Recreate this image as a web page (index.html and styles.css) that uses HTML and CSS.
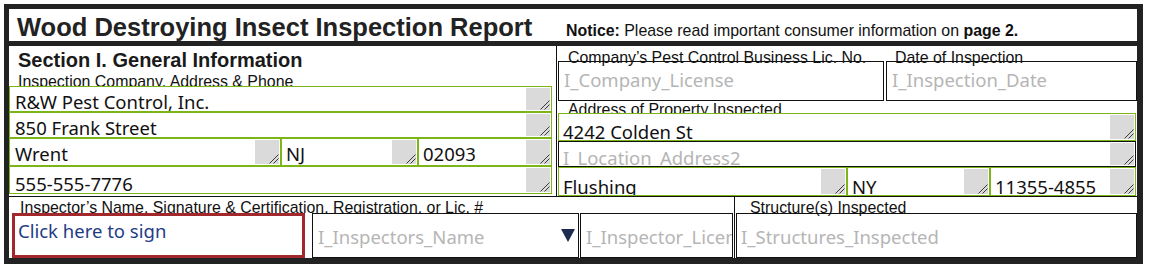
FILE: index.html
```html
<!DOCTYPE html>
<html>
<head>
<meta charset="utf-8">
<link rel="stylesheet" href="styles.css">
</head>
<body>
<div class="form">
  <div class="titlebar">
    <h1 class="title">Wood Destroying Insect Inspection Report</h1>
    <p class="notice"><b>Notice:</b> Please read important consumer information on <b>page 2.</b></p>
  </div>

  <div class="top">
    <div class="left">
      <div class="sec-title">Section I. General Information</div>
      <div class="lab sub">Inspection Company, Address &amp; Phone</div>
      <div class="box g h26 wide"><span class="val pt3 pl5">R&amp;W Pest Control, Inc.</span><span class="grip"><svg width="12" height="12" viewBox="0 0 12 12"><path d="M11.5 2.5 L2.5 11.5 M11.5 6.5 L6.5 11.5" stroke="#3a3a3a" stroke-width="1" fill="none"/></svg></span></div>
      <div class="box g h26 wide"><span class="val pt3 pl5">850 Frank Street</span><span class="grip"><svg width="12" height="12" viewBox="0 0 12 12"><path d="M11.5 2.5 L2.5 11.5 M11.5 6.5 L6.5 11.5" stroke="#3a3a3a" stroke-width="1" fill="none"/></svg></span></div>
      <div class="split h28 wide">
        <div class="box g w-city"><span class="val pt3 pl5">Wrent</span><span class="grip"><svg width="12" height="12" viewBox="0 0 12 12"><path d="M11.5 2.5 L2.5 11.5 M11.5 6.5 L6.5 11.5" stroke="#3a3a3a" stroke-width="1" fill="none"/></svg></span></div>
        <div class="box g w-st"><span class="val pt3">NJ</span><span class="grip"><svg width="12" height="12" viewBox="0 0 12 12"><path d="M11.5 2.5 L2.5 11.5 M11.5 6.5 L6.5 11.5" stroke="#3a3a3a" stroke-width="1" fill="none"/></svg></span></div>
        <div class="box g w-zip"><span class="val pt3">02093</span><span class="grip"><svg width="12" height="12" viewBox="0 0 12 12"><path d="M11.5 2.5 L2.5 11.5 M11.5 6.5 L6.5 11.5" stroke="#3a3a3a" stroke-width="1" fill="none"/></svg></span></div>
      </div>
      <div class="box g h28 wide"><span class="val pt5 pl5">555-555-7776</span><span class="grip"><svg width="12" height="12" viewBox="0 0 12 12"><path d="M11.5 2.5 L2.5 11.5 M11.5 6.5 L6.5 11.5" stroke="#3a3a3a" stroke-width="1" fill="none"/></svg></span></div>
    </div>

    <div class="right">
      <div class="rowA">
        <div class="cell c-lic">
          <div class="lab labA">Company’s Pest Control Business Lic. No.</div>
          <div class="fld hA"><span class="val ph pt6 pl5">I_Company_License</span></div>
        </div>
        <div class="cell c-date">
          <div class="lab labA">Date of Inspection</div>
          <div class="fld hA"><span class="val ph pt6 pl5">I_Inspection_Date</span></div>
        </div>
      </div>
      <div class="lab labB">Address of Property Inspected</div>
      <div class="box g h28 rwide"><span class="val pt6">4242 Colden St</span><span class="grip"><svg width="12" height="12" viewBox="0 0 12 12"><path d="M11.5 2.5 L2.5 11.5 M11.5 6.5 L6.5 11.5" stroke="#3a3a3a" stroke-width="1" fill="none"/></svg></span></div>
      <div class="box k h26 rwide"><span class="val ph pt4">I_Location_Address2</span><span class="grip"><svg width="12" height="12" viewBox="0 0 12 12"><path d="M11.5 2.5 L2.5 11.5 M11.5 6.5 L6.5 11.5" stroke="#3a3a3a" stroke-width="1" fill="none"/></svg></span></div>
      <div class="split h29 rwide">
        <div class="box g w-rcity"><span class="val pt7">Flushing</span><span class="grip"><svg width="12" height="12" viewBox="0 0 12 12"><path d="M11.5 2.5 L2.5 11.5 M11.5 6.5 L6.5 11.5" stroke="#3a3a3a" stroke-width="1" fill="none"/></svg></span></div>
        <div class="box g w-rst"><span class="val pt7">NY</span><span class="grip"><svg width="12" height="12" viewBox="0 0 12 12"><path d="M11.5 2.5 L2.5 11.5 M11.5 6.5 L6.5 11.5" stroke="#3a3a3a" stroke-width="1" fill="none"/></svg></span></div>
        <div class="box g w-rzip"><span class="val pt7">11355-4855</span><span class="grip"><svg width="12" height="12" viewBox="0 0 12 12"><path d="M11.5 2.5 L2.5 11.5 M11.5 6.5 L6.5 11.5" stroke="#3a3a3a" stroke-width="1" fill="none"/></svg></span></div>
      </div>
    </div>
  </div>

  <div class="bottom">
    <div class="bl">
      <div class="lab blab">Inspector’s Name, Signature &amp; Certification, Registration, or Lic. #</div>
      <div class="brow">
        <div class="sign"><span class="val signtxt">Click here to sign</span></div>
        <div class="fld name"><span class="val ph pt11 pl5">I_Inspectors_Name</span><svg class="caret" width="14" height="13" viewBox="0 0 14 13"><polygon points="0,0 14,0 7,13" fill="#1c2b4f"/></svg></div>
        <div class="fld lic"><span class="val ph pt11 pl5">I_Inspector_License</span></div>
      </div>
    </div>
    <div class="br">
      <div class="lab blab brlab">Structure(s) Inspected</div>
      <div class="brow">
        <div class="fld struct"><span class="val ph pt11">I_Structures_Inspected</span></div>
      </div>
    </div>
  </div>
</div>
</body>
</html>
```

FILE: styles.css
```css
* { box-sizing: border-box; margin: 0; padding: 0; }

body {
  margin: 0;
  width: 1149px;
  height: 269px;
  overflow: hidden;
  background: #fff;
  font-family: "Liberation Sans", Arial, sans-serif;
  color: #1a1a1a;
}

.form {
  margin: 4px 0 0 4px;
  width: 1139px;
  border: 5px solid #222;
  border-right-width: 6px;
  border-bottom-width: 6px;
}

/* ---------- title bar ---------- */
.titlebar {
  display: flex;
  height: 37px;
  border-bottom: 5px solid #222;
}
.title {
  flex: 0 0 557px;
  padding: 4px 0 0 8px;
  font-size: 25.5px;
  line-height: 28px;
  font-weight: bold;
  color: #222;
  white-space: nowrap;
}
.notice {
  padding-top: 13px;
  font-size: 15.9px;
  line-height: 18px;
  color: #111;
  white-space: nowrap;
}

/* ---------- labels ---------- */
.lab {
  font-size: 15.9px;
  white-space: nowrap;
  color: #111;
}

/* ---------- top section ---------- */
.top {
  display: flex;
  height: 151px;
  border-bottom: 1px solid #111;
}
.left {
  width: 548px;
  border-right: 1px solid #111;
}
.right {
  width: 580px;
}
.sec-title {
  margin-top: 4px;
  padding-left: 9px;
  font-size: 20px;
  line-height: 20px;
  font-weight: bold;
  color: #1a1a1a;
  white-space: nowrap;
}
.sub {
  height: 16px;
  padding-left: 9px;
  line-height: 24px;
}

/* ---------- fields ---------- */
.box {
  position: relative;
  display: flex;
  background: #fff;
  overflow: hidden;
}
.box.g { border: 1px solid #7cb518; }
.box.k { border: 1px solid #111; }

.fld {
  display: flex;
  border: 1px solid #111;
  overflow: hidden;
}

.val {
  flex: 1;
  min-width: 0;
  padding-left: 4px;
  font-family: "Noto Sans", "Open Sans", sans-serif;
  font-size: 18.5px;
  line-height: 24px;
  color: #111;
  white-space: nowrap;
  align-self: flex-start;
}
.ph { color: #b5b5b5; }
.pl5 { padding-left: 5px; }
.pt3 { padding-top: 3px; }
.pt4 { padding-top: 4px; }
.pt5 { padding-top: 5px; }
.pt6 { padding-top: 6px; }
.pt7 { padding-top: 7px; }
.pt11 { padding-top: 11px; }

.grip {
  flex: 0 0 24px;
  margin: 1px 1px 1px 0;
  background: #dadada;
  display: flex;
  align-items: flex-end;
  justify-content: flex-end;
  position: relative;
}
.grip svg { display: block; }

.h26 { height: 26px; }
.h28 { height: 28px; }
.h29 { height: 29px; }
.wide { width: 543px; }
.rwide { width: 578px; margin-left: 1px; }

.split { display: flex; }
.split .box { height: 100%; }
.w-city { width: 272px; }
.w-st { width: 137px; }
.w-zip { width: 134px; }
.w-rcity { width: 289px; }
.w-rst { width: 143px; }
.w-rzip { width: 146px; }

/* right column row A */
.rowA {
  display: flex;
  gap: 2px;
  padding-left: 1px;
}
.c-lic { width: 326px; }
.c-date { width: 251px; }
.labA {
  height: 15px;
  line-height: 23px;
  padding-left: 10px;
}
.c-date .labA { padding-left: 9px; }
.hA { height: 40px; }
.labB {
  height: 12px;
  line-height: 18.4px;
  padding-left: 11px;
}

/* ---------- bottom section ---------- */
.bottom {
  display: flex;
  height: 61px;
}
.bl {
  width: 726px;
  border-right: 1px solid #111;
}
.br {
  flex: 1;
}
.blab {
  height: 16px;
  line-height: 22px;
  padding-left: 11px;
}
.brlab { padding-left: 15px; }
.brow {
  display: flex;
  height: 45px;
}
.sign {
  margin-left: 3px;
  width: 293px;
  border: 3px solid #a3282b;
  background: #fff;
  position: relative;
  display: flex;
}
.signtxt {
  padding: 3px 0 0 3px;
  color: #1f3c85;
}
.name {
  margin-left: 7px;
  width: 267px;
  background: #fff;
  position: relative;
}
.caret {
  align-self: center;
  margin-right: 3px;
  flex: 0 0 14px;
}
.lic {
  margin-left: 1px;
  width: 153px;
}
.struct {
  margin-left: 1px;
  width: 401px;
}
.struct .val { padding-left: 4px; }
```
